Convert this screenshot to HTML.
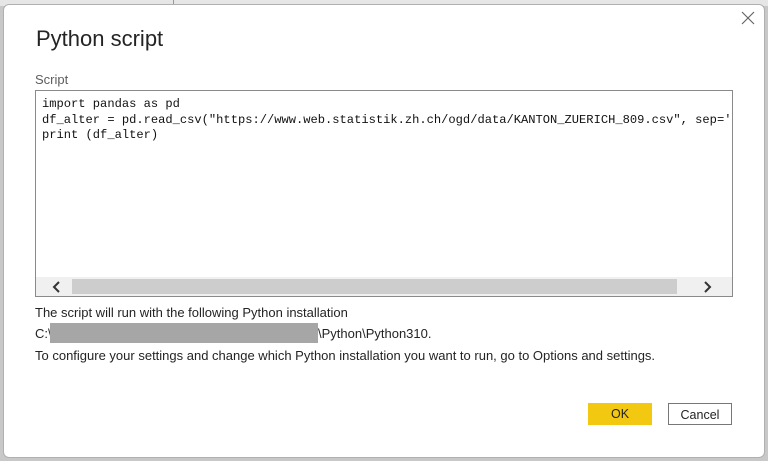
<!DOCTYPE html>
<html><head><meta charset="utf-8"><style>
html,body{margin:0;padding:0;width:768px;height:461px;overflow:hidden;background:#c8c8c8;font-family:"Liberation Sans",sans-serif;}
.topbar{position:absolute;left:0;top:0;width:768px;height:6px;background:#e6e6e6;}
.topbar i{position:absolute;left:173px;top:0;width:1px;height:4px;background:#999;}
.dlg{position:absolute;left:3px;top:4px;width:762px;height:454px;background:#fff;border-radius:6px;border:1px solid #b0b0b0;box-sizing:border-box;}
.t{position:absolute;color:#252423;white-space:nowrap;}
.ta{position:absolute;left:35px;top:90px;width:698px;height:207px;border:1px solid #8a8a8a;box-sizing:border-box;overflow:hidden;}
pre{margin:0;position:absolute;left:6px;top:6px;font-family:"Liberation Mono",monospace;font-size:12.1px;line-height:15.5px;color:#111;}
.sb{position:absolute;left:0;bottom:0;width:100%;height:19px;background:#f0f0f0;}
.th{position:absolute;left:36px;top:2px;width:605px;height:15px;background:#cdcdcd;}
.btn{position:absolute;top:403px;width:64px;height:22px;box-sizing:border-box;font-size:12.5px;text-align:center;line-height:22px;color:#252423;}
</style></head><body>
<div class="topbar"><i></i></div>
<div class="dlg"></div>
<svg style="position:absolute;left:741px;top:11px" width="14" height="14"><path d="M1 1L13 13M13 1L1 13" stroke="#666" stroke-width="1.2"/></svg>
<div class="t" style="left:36px;top:26px;font-size:22px;color:#252423">Python script</div>
<div class="t" style="left:35px;top:72px;font-size:13px;color:#605e5c">Script</div>
<div class="ta"><pre>import pandas as pd
df_alter = pd.read_csv("https://www.web.statistik.zh.ch/ogd/data/KANTON_ZUERICH_809.csv", sep=';
print (df_alter)</pre>
<div class="sb"><div class="th"></div>
<svg style="position:absolute;left:16px;top:4px" width="10" height="12"><path d="M7 1L2 6L7 11" stroke="#333" stroke-width="2" fill="none"/></svg>
<svg style="position:absolute;left:666px;top:4px" width="10" height="12"><path d="M3 1L8 6L3 11" stroke="#333" stroke-width="2" fill="none"/></svg>
</div></div>
<div class="t" style="left:35px;top:305px;font-size:13px">The script will run with the following Python installation</div>
<div class="t" style="left:35px;top:326px;font-size:13px">C:\</div>
<div style="position:absolute;left:50px;top:323px;width:268px;height:20px;background:#a6a6a6"></div>
<div class="t" style="left:318px;top:326px;font-size:13px">\Python\Python310.</div>
<div class="t" style="left:35px;top:348px;font-size:13px">To configure your settings and change which Python installation you want to run, go to Options and settings.</div>
<div class="btn" style="left:588px;background:#f2c811">OK</div>
<div class="btn" style="left:668px;border:1px solid #777;background:#fff">Cancel</div>
</body></html>
